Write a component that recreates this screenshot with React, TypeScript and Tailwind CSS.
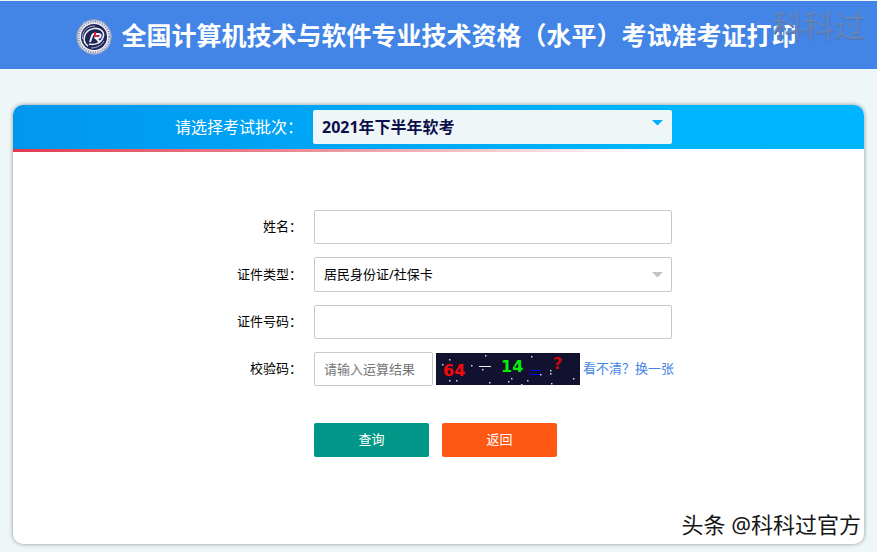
import { useState } from "react";
import type { FormEvent, ReactNode } from "react";

const BATCHES = ["2021年下半年软考"];
const ID_TYPES = ["居民身份证/社保卡"];

// Noise dots of the captcha, [x, y]
const DOTS = [
  [49, 2], [13, 6], [6, 11], [35, 12], [46, 16], [95, 3], [13, 27], [20, 27],
  [53, 29], [75, 25], [72, 28], [91, 27], [85, 31], [104, 21], [114, 17],
  [114, 20], [115, 30], [137, 25],
];

const fieldClass =
  "w-full rounded-[2px] border border-[#c9c9c9] bg-white px-[9px] text-[13px] text-black outline-none placeholder:text-[#757575] focus:border-[#4385e6]";

function Emblem() {
  return (
    <svg viewBox="0 0 36 36" className="h-9 w-9 shrink-0" aria-hidden="true">
      <circle cx="18" cy="18" r="17.5" fill="#e9ebf4" />
      <circle cx="18" cy="18" r="17" fill="none" stroke="#6a7299" strokeWidth="0.8" />
      <circle
        cx="18"
        cy="18"
        r="15.2"
        fill="none"
        stroke="#7a7f9f"
        strokeWidth="1.4"
        strokeDasharray="1.2 1.2"
      />
      <circle cx="18" cy="18" r="13" fill="#1d2456" />
      <path
        d="M12 27C5 22 8 11 18 9.5c7-1 11 4 9 9-2 5.500-8 8-14 6.500"
        fill="none"
        stroke="#eceef7"
        strokeWidth="1.6"
      />
      <path
        d="M6.500 20C6 11 12 7 19 7M15 29c6 0 11-3 13-7"
        fill="none"
        stroke="#aeb5d4"
        strokeWidth="1"
      />
      <path
        d="M14 23l2.500-7.500M16.500 15h6c3.500 0 2.500 4-1 4h-3M20 19l4 4.500"
        fill="none"
        stroke="#f1f3fb"
        strokeWidth="2"
      />
      <path d="M18 13h2v3h2.500v2H18z" fill="#e01f3a" />
    </svg>
  );
}

function Caret({ className }: { className: string }) {
  return (
    <svg
      viewBox="0 0 11 6"
      className={`pointer-events-none absolute right-[9px] ${className}`}
      aria-hidden="true"
    >
      <path d="M0 0h11L5.5 5.5z" fill="currentColor" />
    </svg>
  );
}

function Captcha() {
  return (
    <svg
      viewBox="0 0 144 32"
      className="h-8 w-[144px] shrink-0"
      role="img"
      aria-label="验证码"
      fontFamily="'DejaVu Sans', sans-serif"
      fontWeight="bold"
      fontSize="16"
    >
      <rect width="144" height="32" fill="#121230" />
      {DOTS.map(([x, y]) => (
        <rect key={`${x}-${y}`} x={x} y={y} width="1.5" height="1.5" fill="#d8d8e0" />
      ))}
      <text x="7" y="23" fill="#f50a0a">64</text>
      <rect x="43" y="13" width="12" height="1" fill="#f0f0f0" />
      <text x="65" y="19" fill="#05f005">14</text>
      <path d="M94 17h11v1h-11zM93 21h11v1h-11z" fill="#0000f5" />
      <text x="117" y="16" fill="#cc0808">?</text>
    </svg>
  );
}

function Row({
  id,
  label,
  children,
}: {
  id: string;
  label: string;
  children: ReactNode;
}) {
  return (
    <div className="flex items-center">
      <label htmlFor={id} className="w-[109px] shrink-0 pr-3 text-right text-[13px]">
        {label}
      </label>
      <div className="relative flex min-w-0 flex-1 items-center">{children}</div>
    </div>
  );
}

export default function App() {
  const [batch, setBatch] = useState(BATCHES[0]);
  const [name, setName] = useState("");
  const [idType, setIdType] = useState(ID_TYPES[0]);
  const [idNumber, setIdNumber] = useState("");
  const [answer, setAnswer] = useState("");

  const handleSubmit = (e: FormEvent) => {
    e.preventDefault();
  };

  const handleReset = () => {
    setName("");
    setIdNumber("");
    setAnswer("");
  };

  return (
    <div className="relative min-h-screen bg-[#eef6f8] font-['Noto_Sans','Noto_Sans_CJK_SC',sans-serif] text-black">
      <header className="relative flex h-[69px] items-center justify-center gap-[9px] border-t border-[#eef6f8] bg-[#4385e6] pt-1 pr-1">
        <Emblem />
        <h1 className="pb-1 text-[25px] leading-9 font-bold whitespace-nowrap text-white">
          全国计算机技术与软件专业技术资格（水平）考试准考证打印
        </h1>
        <span className="pointer-events-none absolute top-0.5 right-3 text-[31px] leading-[44px] text-[#6887b9]/80 [text-shadow:1px_1px_0_#4a76bd]">
          科科过
        </span>
      </header>

      <main className="px-[13px] pt-9 pb-[7px]">
        <form
          onSubmit={handleSubmit}
          className="overflow-hidden rounded-[10px] bg-white shadow-[0_0_4px_rgba(0,0,0,0.4)]"
        >
          <div className="bg-linear-to-r from-[#0197ee] to-[#00b5ff] to-75%">
            <div className="mx-auto flex h-11 w-full max-w-[467px] items-center">
              <label
                htmlFor="batch"
                className="flex w-[108px] shrink-0 justify-end pr-[10px] text-[16px] whitespace-nowrap text-white"
              >
                请选择考试批次：
              </label>
              <div className="relative min-w-0 flex-1">
                <select
                  id="batch"
                  value={batch}
                  onChange={(e) => setBatch(e.target.value)}
                  className="block h-[34px] w-full appearance-none rounded-[2px] bg-[#eef6f8] px-[9px] text-[16px] font-bold text-[#0e0e4a] outline-none"
                >
                  {BATCHES.map((b) => (
                    <option key={b}>{b}</option>
                  ))}
                </select>
                <Caret className="top-[10px] h-[6px] w-[11px] text-[#00b0fb]" />
              </div>
            </div>
          </div>
          <div className="h-[3px] bg-linear-to-r from-[#e23a4c] via-[#e9808c] via-30% to-white to-75%" />

          <div className="mx-auto w-full max-w-[467px] pt-[58px] pb-[87px]">
            <div className="flex flex-col gap-[13px]">
              <Row id="name" label="姓名：">
                <input
                  id="name"
                  type="text"
                  value={name}
                  onChange={(e) => setName(e.target.value)}
                  className={`h-[34px] ${fieldClass}`}
                />
              </Row>
              <Row id="id-type" label="证件类型：">
                <select
                  id="id-type"
                  value={idType}
                  onChange={(e) => setIdType(e.target.value)}
                  className={`h-[35px] appearance-none ${fieldClass}`}
                >
                  {ID_TYPES.map((t) => (
                    <option key={t}>{t}</option>
                  ))}
                </select>
                <Caret className="h-[6px] w-[11px] text-[#c2c2c2]" />
              </Row>
              <Row id="id-number" label="证件号码：">
                <input
                  id="id-number"
                  type="text"
                  value={idNumber}
                  onChange={(e) => setIdNumber(e.target.value)}
                  className={`h-[34px] ${fieldClass}`}
                />
              </Row>
              <Row id="answer" label="校验码：">
                <div className="mr-[3px] w-[119px] shrink-0">
                  <input
                    id="answer"
                    type="text"
                    placeholder="请输入运算结果"
                    value={answer}
                    onChange={(e) => setAnswer(e.target.value)}
                    className={`block h-[34px] ${fieldClass}`}
                  />
                </div>
                <Captcha />
                <a href="#captcha" className="ml-[3px] text-[13px] whitespace-nowrap text-[#4385e6]">
                  看不清？换一张
                </a>
              </Row>
            </div>

            <div className="mt-[37px] flex gap-[13px] pl-[109px]">
              <button
                type="submit"
                className="h-[34px] w-[115px] cursor-pointer rounded-[2px] bg-[#009688] text-[13px] text-white hover:opacity-80"
              >
                查询
              </button>
              <button
                type="button"
                onClick={handleReset}
                className="h-[34px] w-[115px] cursor-pointer rounded-[2px] bg-[#ff5714] text-[13px] text-white hover:opacity-80"
              >
                返回
              </button>
            </div>
          </div>
        </form>
      </main>

      <p className="pointer-events-none absolute right-4 bottom-[10px] text-[22px] leading-9 text-[#161616] [text-shadow:-1px_-1px_0_#fff]">
        头条 @科科过官方
      </p>
    </div>
  );
}
